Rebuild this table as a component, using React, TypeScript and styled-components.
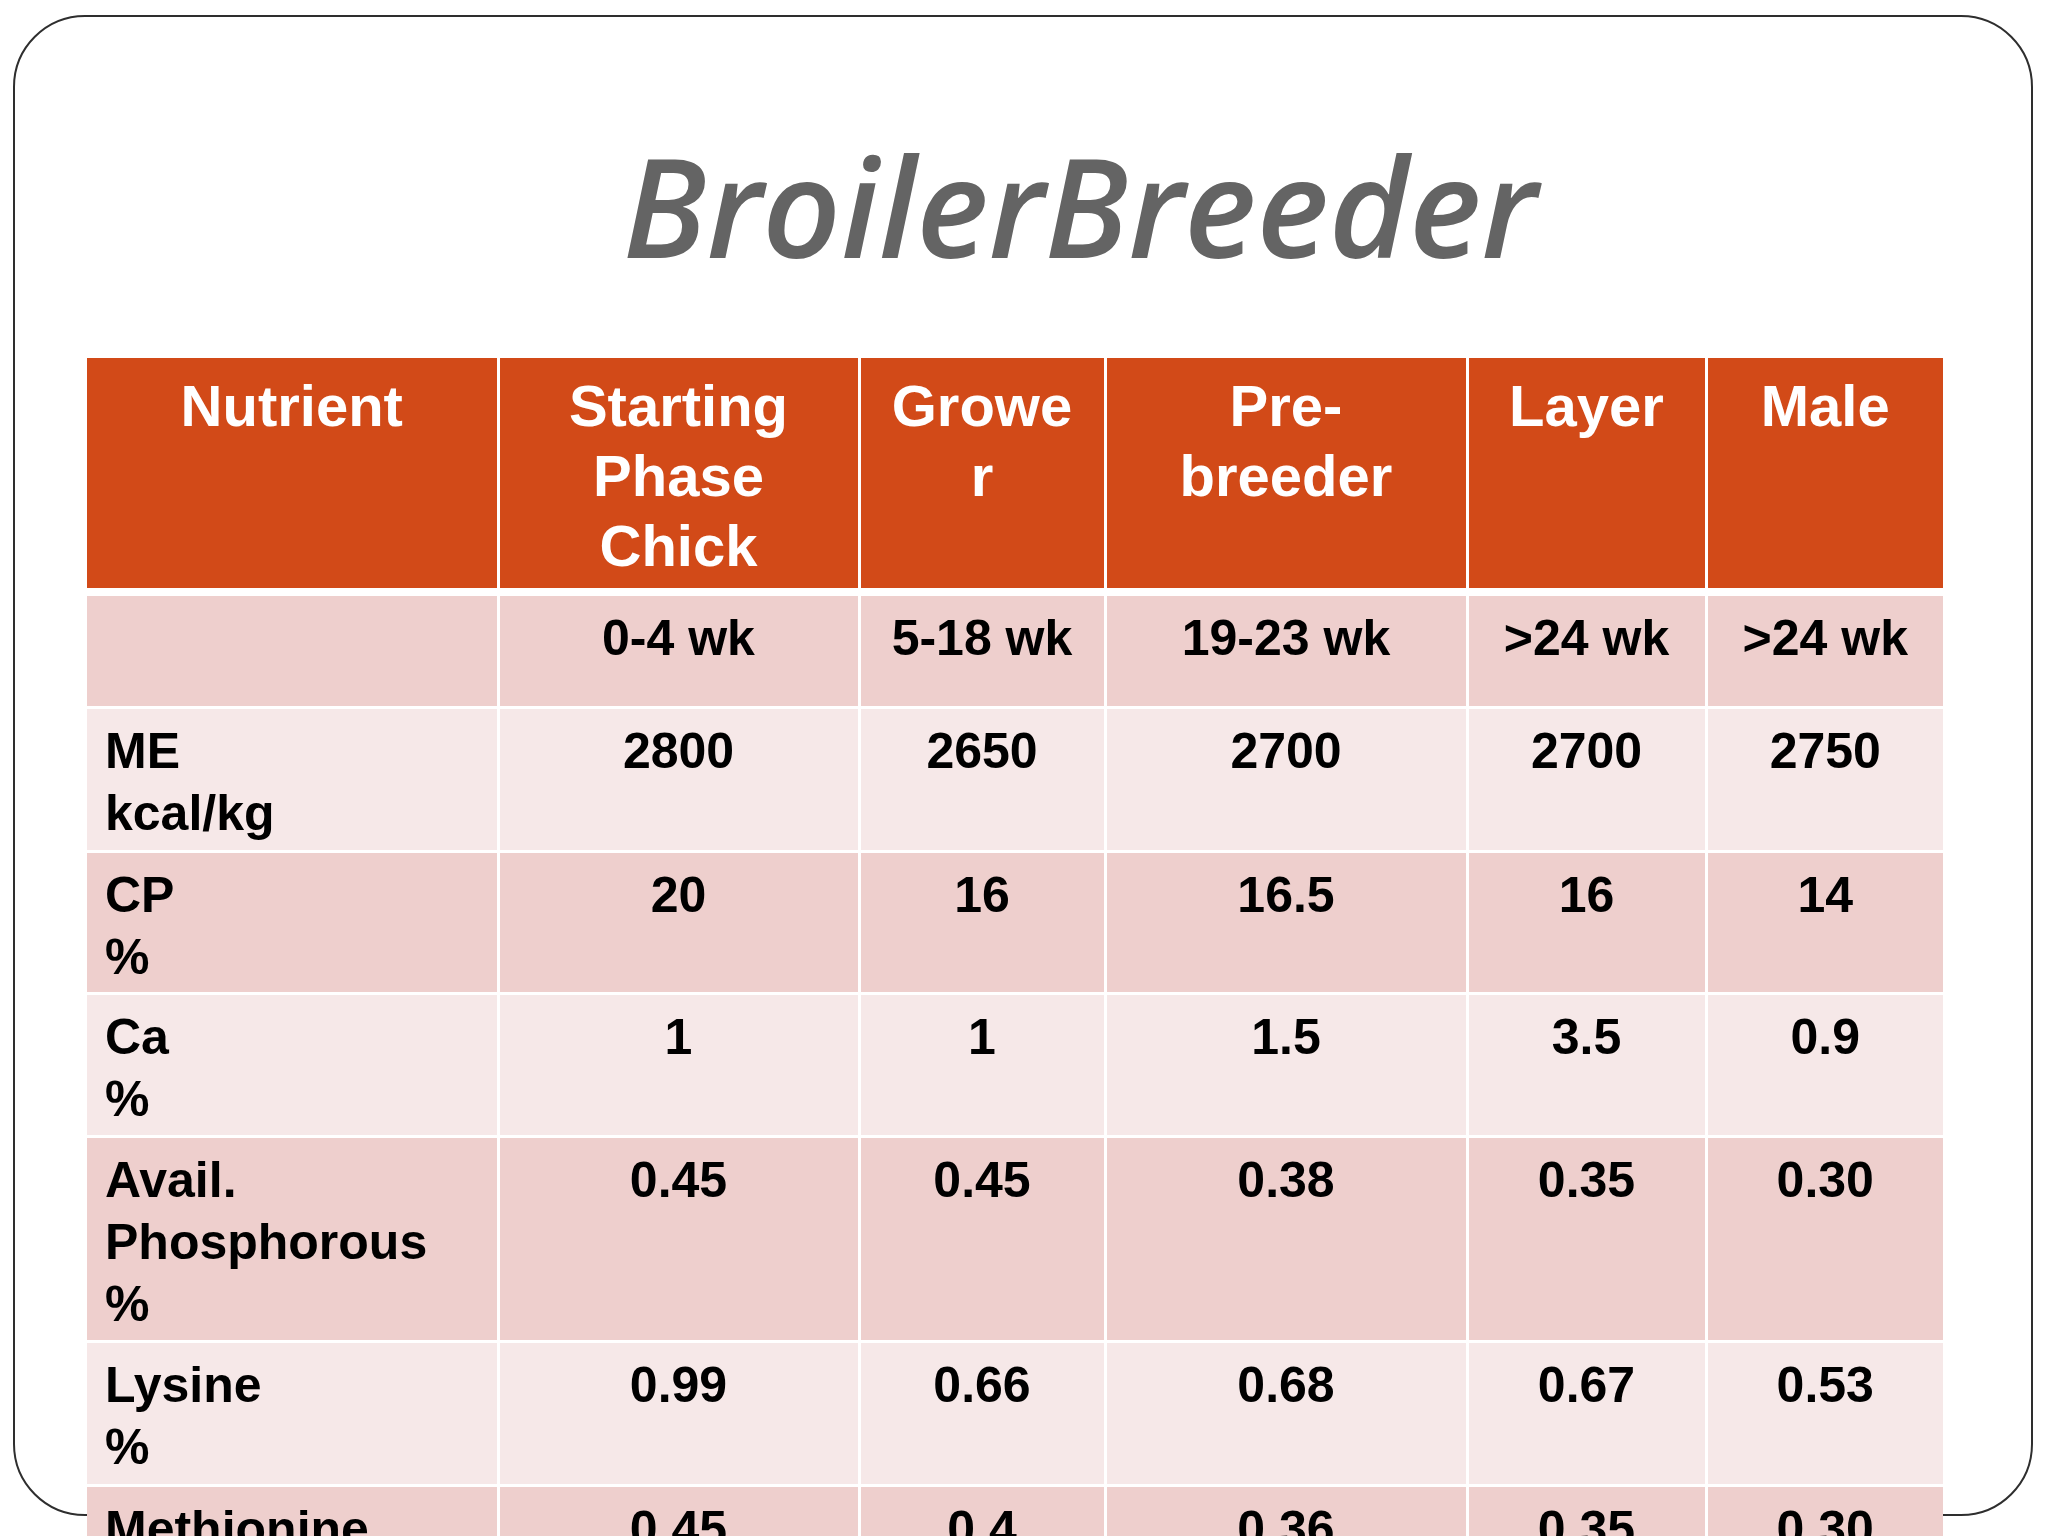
import React from "react";
import styled, { createGlobalStyle } from "styled-components";

const Global = createGlobalStyle`
  html, body {
    margin: 0;
    padding: 0;
    background: #ffffff;
    overflow: hidden;
    height: 1536px;
  }
  body {
    font-family: "Liberation Sans", Arial, sans-serif;
  }
`;

const Slide = styled.div`
  box-sizing: border-box;
  width: 2020px;
  height: 1501px;
  margin: 15px 0 0 13px;
  border: 2px solid #2e2e2e;
  border-radius: 72px;
  background: #ffffff;
  position: relative;
`;

const Title = styled.h1`
  margin: 0;
  padding: 120px 0 0 114px;
  height: 139px;
  font-family: "Open Sans", "Noto Sans", sans-serif;
  font-style: italic;
  font-weight: 600;
  font-size: 137px;
  line-height: 137px;
  letter-spacing: 0;
  color: #646464;
  text-align: center;
`;

const Table = styled.table`
  margin: 82px 0 0 72px;
  width: 1856px;
  table-layout: fixed;
  border-collapse: collapse;
  border-style: hidden;
`;

const HeadCell = styled.th`
  background: #d24a18;
  color: #ffffff;
  font-family: "Liberation Sans", Arial, sans-serif;
  font-weight: 700;
  font-size: 58px;
  line-height: 70px;
  text-align: center;
  vertical-align: top;
  padding: 13px 8px 0;
  border: 3px solid #ffffff;
  border-bottom-width: 8px;
  white-space: nowrap;
`;

const Row = styled.tr<{ $h: number }>`
  height: ${(p) => p.$h}px;
`;

const Cell = styled.td<{ $dark: boolean; $first?: boolean }>`
  background: ${(p) => (p.$dark ? "#eecfcd" : "#f6e8e8")};
  color: #000000;
  font-family: "Liberation Sans", Arial, sans-serif;
  font-weight: 700;
  font-size: 50px;
  line-height: 62px;
  text-align: ${(p) => (p.$first ? "left" : "center")};
  vertical-align: top;
  padding: ${(p) => (p.$first ? "11px 8px 0 18px" : "11px 8px 0")};
  border: 3px solid #ffffff;
  white-space: nowrap;
`;

const widths = [411, 361, 246, 362, 239, 237];

const headers: React.ReactNode[] = [
  "Nutrient",
  <>
    Starting
    <br />
    Phase
    <br />
    Chick
  </>,
  <>
    Growe
    <br />r
  </>,
  <>
    Pre-
    <br />
    breeder
  </>,
  "Layer",
  "Male",
];

type RowData = { label: React.ReactNode; values: string[]; h: number };

const rows: RowData[] = [
  { label: "", values: ["0-4 wk", "5-18 wk", "19-23 wk", ">24 wk", ">24 wk"], h: 115 },
  {
    label: (
      <>
        ME
        <br />
        kcal/kg
      </>
    ),
    values: ["2800", "2650", "2700", "2700", "2750"],
    h: 144,
  },
  {
    label: (
      <>
        CP
        <br />%
      </>
    ),
    values: ["20", "16", "16.5", "16", "14"],
    h: 142,
  },
  {
    label: (
      <>
        Ca
        <br />%
      </>
    ),
    values: ["1", "1", "1.5", "3.5", "0.9"],
    h: 143,
  },
  {
    label: (
      <>
        Avail.
        <br />
        Phosphorous
        <br />%
      </>
    ),
    values: ["0.45", "0.45", "0.38", "0.35", "0.30"],
    h: 205,
  },
  {
    label: (
      <>
        Lysine
        <br />%
      </>
    ),
    values: ["0.99", "0.66", "0.68", "0.67", "0.53"],
    h: 144,
  },
  {
    label: (
      <>
        Methionine
        <br />%
      </>
    ),
    values: ["0.45", "0.4", "0.36", "0.35", "0.30"],
    h: 144,
  },
];

export default function App() {
  return (
    <>
      <Global />
      <Slide>
        <Title>BroilerBreeder</Title>
        <Table>
          <colgroup>
            {widths.map((w, i) => (
              <col key={i} style={{ width: w }} />
            ))}
          </colgroup>
          <thead>
            <Row $h={234}>
              {headers.map((h, i) => (
                <HeadCell key={i}>{h}</HeadCell>
              ))}
            </Row>
          </thead>
          <tbody>
            {rows.map((r, ri) => (
              <Row key={ri} $h={r.h}>
                <Cell $dark={ri % 2 === 0} $first>
                  {r.label}
                </Cell>
                {r.values.map((v, vi) => (
                  <Cell key={vi} $dark={ri % 2 === 0}>
                    {v}
                  </Cell>
                ))}
              </Row>
            ))}
          </tbody>
        </Table>
      </Slide>
    </>
  );
}
